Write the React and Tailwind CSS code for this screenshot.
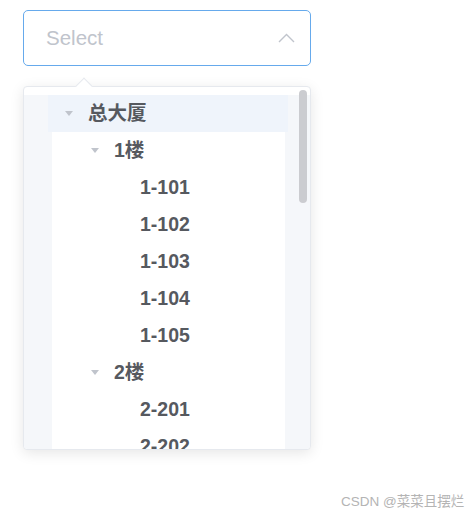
import React from 'react';

const nodes = [
    { label: '总大厦', level: 0, parent: true, active: true },
    { label: '1楼', level: 1, parent: true },
    { label: '1-101', level: 2 },
    { label: '1-102', level: 2 },
    { label: '1-103', level: 2 },
    { label: '1-104', level: 2 },
    { label: '1-105', level: 2 },
    { label: '2楼', level: 1, parent: true },
    { label: '2-201', level: 2 },
    { label: '2-202', level: 2 },
];

const indent = ['pl-[13px]', 'pl-[39px]', 'pl-[65px]'];

function TreeRow({ node }) {
    return (
        <div
            className={
                'h-[37px] shrink-0 flex items-center ' +
                indent[node.level] +
                (node.active ? ' bg-[#eff4fb] -ml-[4px] -mr-[3px] !pl-[17px]' : '')
            }
        >
            {/* caret */}
            <span className="w-[8px] h-[5px] flex">
                {node.parent && (
                    <svg width="8" height="5" viewBox="0 0 8 5">
                        <path d="M0 0 L8 0 L4 5 Z" fill="#c0c4cc" />
                    </svg>
                )}
            </span>
            <span className="ml-[15px] text-[19.5px] font-bold text-[#56595f] leading-none">
                {node.label}
            </span>
        </div>
    );
}

export default function App() {
    return (
        <div
            className="relative w-[474px] h-[517px] bg-white overflow-hidden"
            style={{ fontFamily: '"Liberation Sans", Arial, "Noto Sans CJK SC", sans-serif' }}
        >
            {/* select input */}
            <div className="ml-[23px] mt-[10px] w-[288px] h-[56px] border-[1.5px] border-[#66aaec] rounded-[5px] flex items-center justify-between pl-[22px] pr-[15px]">
                <span className="text-[20.5px] text-[#c0c4cc]">Select</span>
                <svg width="17" height="10" viewBox="0 0 17 10" fill="none">
                    <polyline points="1,9 8.5,1.5 16,9" stroke="#c0c4cc" strokeWidth="1.4" />
                </svg>
            </div>

            {/* dropdown */}
            <div className="absolute left-[23px] top-[86px] w-[288px] h-[364px] bg-white border border-[#e6e9ee] rounded-[4px] shadow-[0_3px_14px_rgba(0,0,0,0.1)]">
                <div className="absolute left-[54px] -top-[7px] w-[12px] h-[12px] bg-white border-l border-t border-[#e6e9ee] rotate-45" />
                <div className="relative h-full pt-[8px] rounded-[4px] overflow-hidden">
                    <div className="h-full bg-[#f5f7fa] pl-[28px] pr-[25px] overflow-hidden">
                        <div className="h-full bg-white flex flex-col">
                            {nodes.map((n) => (
                                <TreeRow key={n.label} node={n} />
                            ))}
                        </div>
                    </div>
                    {/* scrollbar */}
                    <div className="absolute right-[3px] top-[3px] w-[8px] h-[113px] rounded-full bg-[#cbccd0]" />
                </div>
            </div>

            {/* watermark */}
            <div className="absolute left-[341px] top-[492px] text-[13.5px] text-[#b4b4b4] whitespace-nowrap">
                CSDN @菜菜且摆烂
            </div>
        </div>
    );
}
